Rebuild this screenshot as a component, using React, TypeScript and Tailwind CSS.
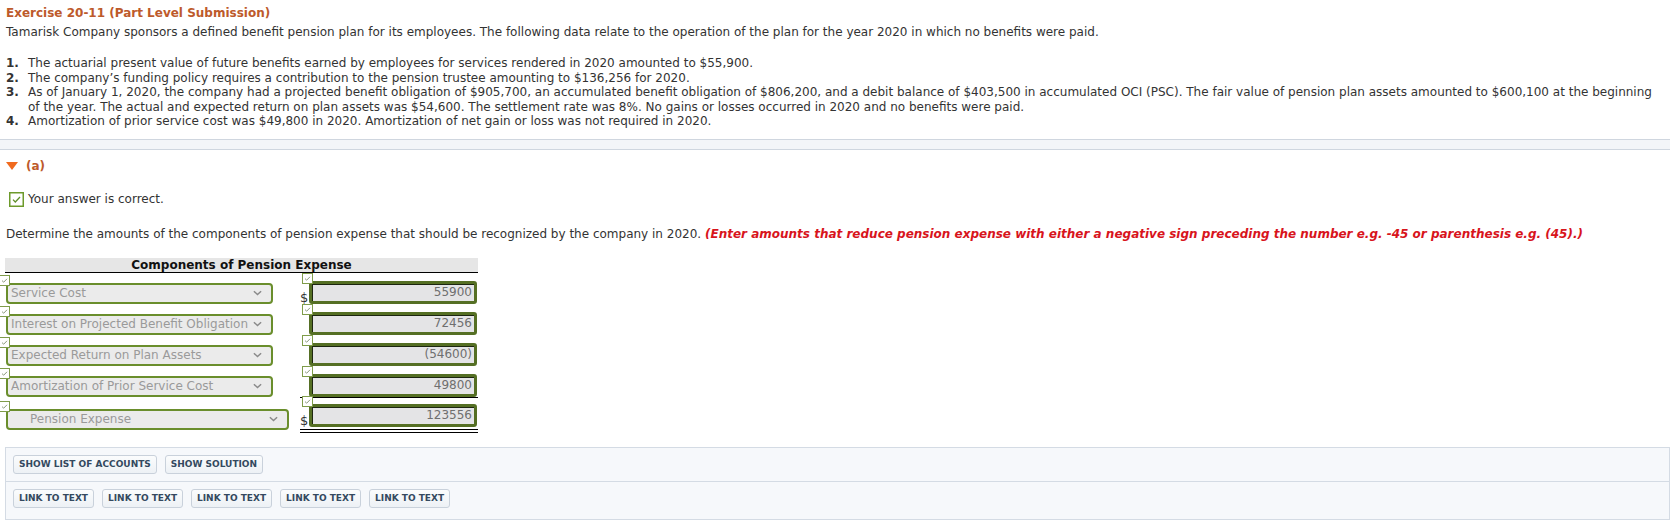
import React from 'react'

const rows = [
  { label: 'Service Cost', value: '55900', dollar: true },
  { label: 'Interest on Projected Benefit Obligation', value: '72456', dollar: false },
  { label: 'Expected Return on Plan Assets', value: '(54600)', dollar: false },
  { label: 'Amortization of Prior Service Cost', value: '49800', dollar: false },
]

const facts: React.ReactNode[] = [
  'The actuarial present value of future benefits earned by employees for services rendered in 2020 amounted to $55,900.',
  'The company\u2019s funding policy requires a contribution to the pension trustee amounting to $136,256 for 2020.',
  <>
    As of January 1, 2020, the company had a projected benefit obligation of $905,700, an accumulated benefit obligation of $806,200, and a debit balance of $403,500 in accumulated OCI (PSC). The fair value of pension plan assets amounted to $600,100 at the beginning
    <br />
    of the year. The actual and expected return on plan assets was $54,600. The settlement rate was 8%. No gains or losses occurred in 2020 and no benefits were paid.
  </>,
  'Amortization of prior service cost was $49,800 in 2020. Amortization of net gain or loss was not required in 2020.',
]

// small tick box that sits on top of each answer field
function Tick({ className }: { className: string }) {
  return (
    <svg viewBox="0 0 11 11" className={className}>
      <rect x="0.5" y="0.5" width="10" height="10" fill="#fff" stroke="#7f9c4a" />
      <path d="M3 5.6 4.7 7.2 8 3.8" fill="none" stroke="#8b9a7c" strokeWidth="1" />
    </svg>
  )
}

function Chevron() {
  return (
    <svg viewBox="0 0 10 6" className="h-[6px] w-[9px]">
      <path d="M1 1 5 4.8 9 1" fill="none" stroke="#8a8a8a" strokeWidth="1.6" />
    </svg>
  )
}

function Select({ label, wide }: { label: string; wide?: boolean }) {
  return (
    <div
      className={`relative flex h-[21px] items-center rounded-[4px] border-2 border-[#6a8e2c] bg-[#ebebeb] pr-[9px] ${
        wide ? 'w-[283px] pl-[22px]' : 'w-[267px] pl-[3px]'
      }`}
    >
      <Tick className="absolute -left-[9px] -top-[10px] h-[11px] w-[11px]" />
      <span className="flex-1 truncate text-[12px] text-[#9a9a9a]">{label}</span>
      <Chevron />
    </div>
  )
}

function Amount({ value }: { value: string }) {
  return (
    <div className="relative ml-auto mr-px flex h-[23px] w-[168px] items-center justify-end rounded-[3px] border-[3px] border-[#556f24] bg-[#e4e4e6] pr-[2px] shadow-[inset_1px_1px_0_#1d2610]">
      <Tick className="absolute -left-[10px] -top-[11px] h-[11px] w-[11px]" />
      <span className="text-[12px] text-[#6f6f6f]">{value}</span>
    </div>
  )
}

function SmallButton({ children }: { children: React.ReactNode }) {
  return (
    <button className="h-[19px] rounded-[3px] border border-[#c9d1db] bg-gradient-to-b from-[#fbfcfd] to-[#edf1f5] px-[5px] text-[9px] font-bold text-[#34495f]">
      {children}
    </button>
  )
}

export default function App() {
  return (
    <div className="min-h-screen bg-white text-[12px] leading-[14.5px] text-[#333] [font-family:'DejaVu_Sans',Verdana,sans-serif]">
      <div className="pl-[6px] pt-[6px]">
        <h1 className="text-[12px] font-bold text-[#bd5a2b]">Exercise 20-11 (Part Level Submission)</h1>
        <p className="mt-[4px]">
          Tamarisk Company sponsors a defined benefit pension plan for its employees. The following data relate to the operation of the plan for the year 2020 in which no benefits were paid.
        </p>
        <ol className="mt-[17px]">
          {facts.map((text, i) => (
            <li key={i} className="flex">
              <span className="w-[22px] shrink-0 font-bold">{i + 1}.</span>
              <span className="whitespace-nowrap">{text}</span>
            </li>
          ))}
        </ol>
      </div>

      <div className="mt-[10px] h-[11px] border-y border-[#cfd6df] bg-[#f3f5f8]" />

      <div className="pl-[6px]">
        {/* Part (a) */}
        <div className="mt-[9px] flex items-center gap-[8px]">
          <svg viewBox="0 0 12 8" className="h-[8px] w-[12px]">
            <path d="M0 0h12L6 8z" fill="#f06a1e" />
          </svg>
          <span className="font-bold text-[#bd5a2b]">(a)</span>
        </div>

        <div className="mt-[19px] flex items-center gap-[4px] pl-[3px]">
          <svg viewBox="0 0 15 15" className="h-[15px] w-[15px]">
            <rect x="0.75" y="0.75" width="13.5" height="13.5" fill="#fff" stroke="#6d9a2b" strokeWidth="1.5" />
            <path d="M4 7.6 6.3 10 11 5" fill="none" stroke="#5f8f2a" strokeWidth="1.3" />
          </svg>
          <span>Your answer is correct.</span>
        </div>

        <p className="mt-[20px]">
          Determine the amounts of the components of pension expense that should be recognized by the company in 2020.{' '}
          <em className="font-bold text-[#d8141c]">
            (Enter amounts that reduce pension expense with either a negative sign preceding the number e.g. -45 or parenthesis e.g. (45).)
          </em>
        </p>

        {/* Components table */}
        <div className="-ml-px mt-[16px] w-[473px]">
          <div className="border-b-[1.5px] border-black bg-[#e6e6e6] text-center text-[12px] font-bold leading-[14px] text-[#111]">
            Components of Pension Expense
          </div>
          {rows.map((row) => (
            <div key={row.label} className="flex h-[31px] items-end">
              <div className="w-[295px] pl-px">
                <Select label={row.label} />
              </div>
              <div className="flex flex-1 items-end">
                <span className="w-[9px] text-[13px] leading-[13px]">{row.dollar ? '$' : ''}</span>
                <Amount value={row.value} />
              </div>
            </div>
          ))}
          <div className="flex items-end">
            <div className="w-[295px] pb-[3px] pl-px">
              <Select label="Pension Expense" wide />
            </div>
            <div className="flex flex-1 items-end border-b-[4px] border-t border-double border-b-black border-t-black pb-[2px] pt-[6px]">
              <span className="w-[9px] text-[13px] leading-[13px]">$</span>
              <Amount value="123556" />
            </div>
          </div>
        </div>

        {/* Footer tools */}
        <div className="-ml-px mt-[14px] border border-[#d4dbe4] bg-[#f6f8fb]">
          <div className="flex gap-[8px] px-[7px] py-[7px]">
            <SmallButton>SHOW LIST OF ACCOUNTS</SmallButton>
            <SmallButton>SHOW SOLUTION</SmallButton>
          </div>
          <div className="flex gap-[8px] border-t border-[#d4dbe4] px-[7px] pb-[11px] pt-[7px]">
            {[1, 2, 3, 4, 5].map((n) => (
              <SmallButton key={n}>LINK TO TEXT</SmallButton>
            ))}
          </div>
        </div>
      </div>
    </div>
  )
}
